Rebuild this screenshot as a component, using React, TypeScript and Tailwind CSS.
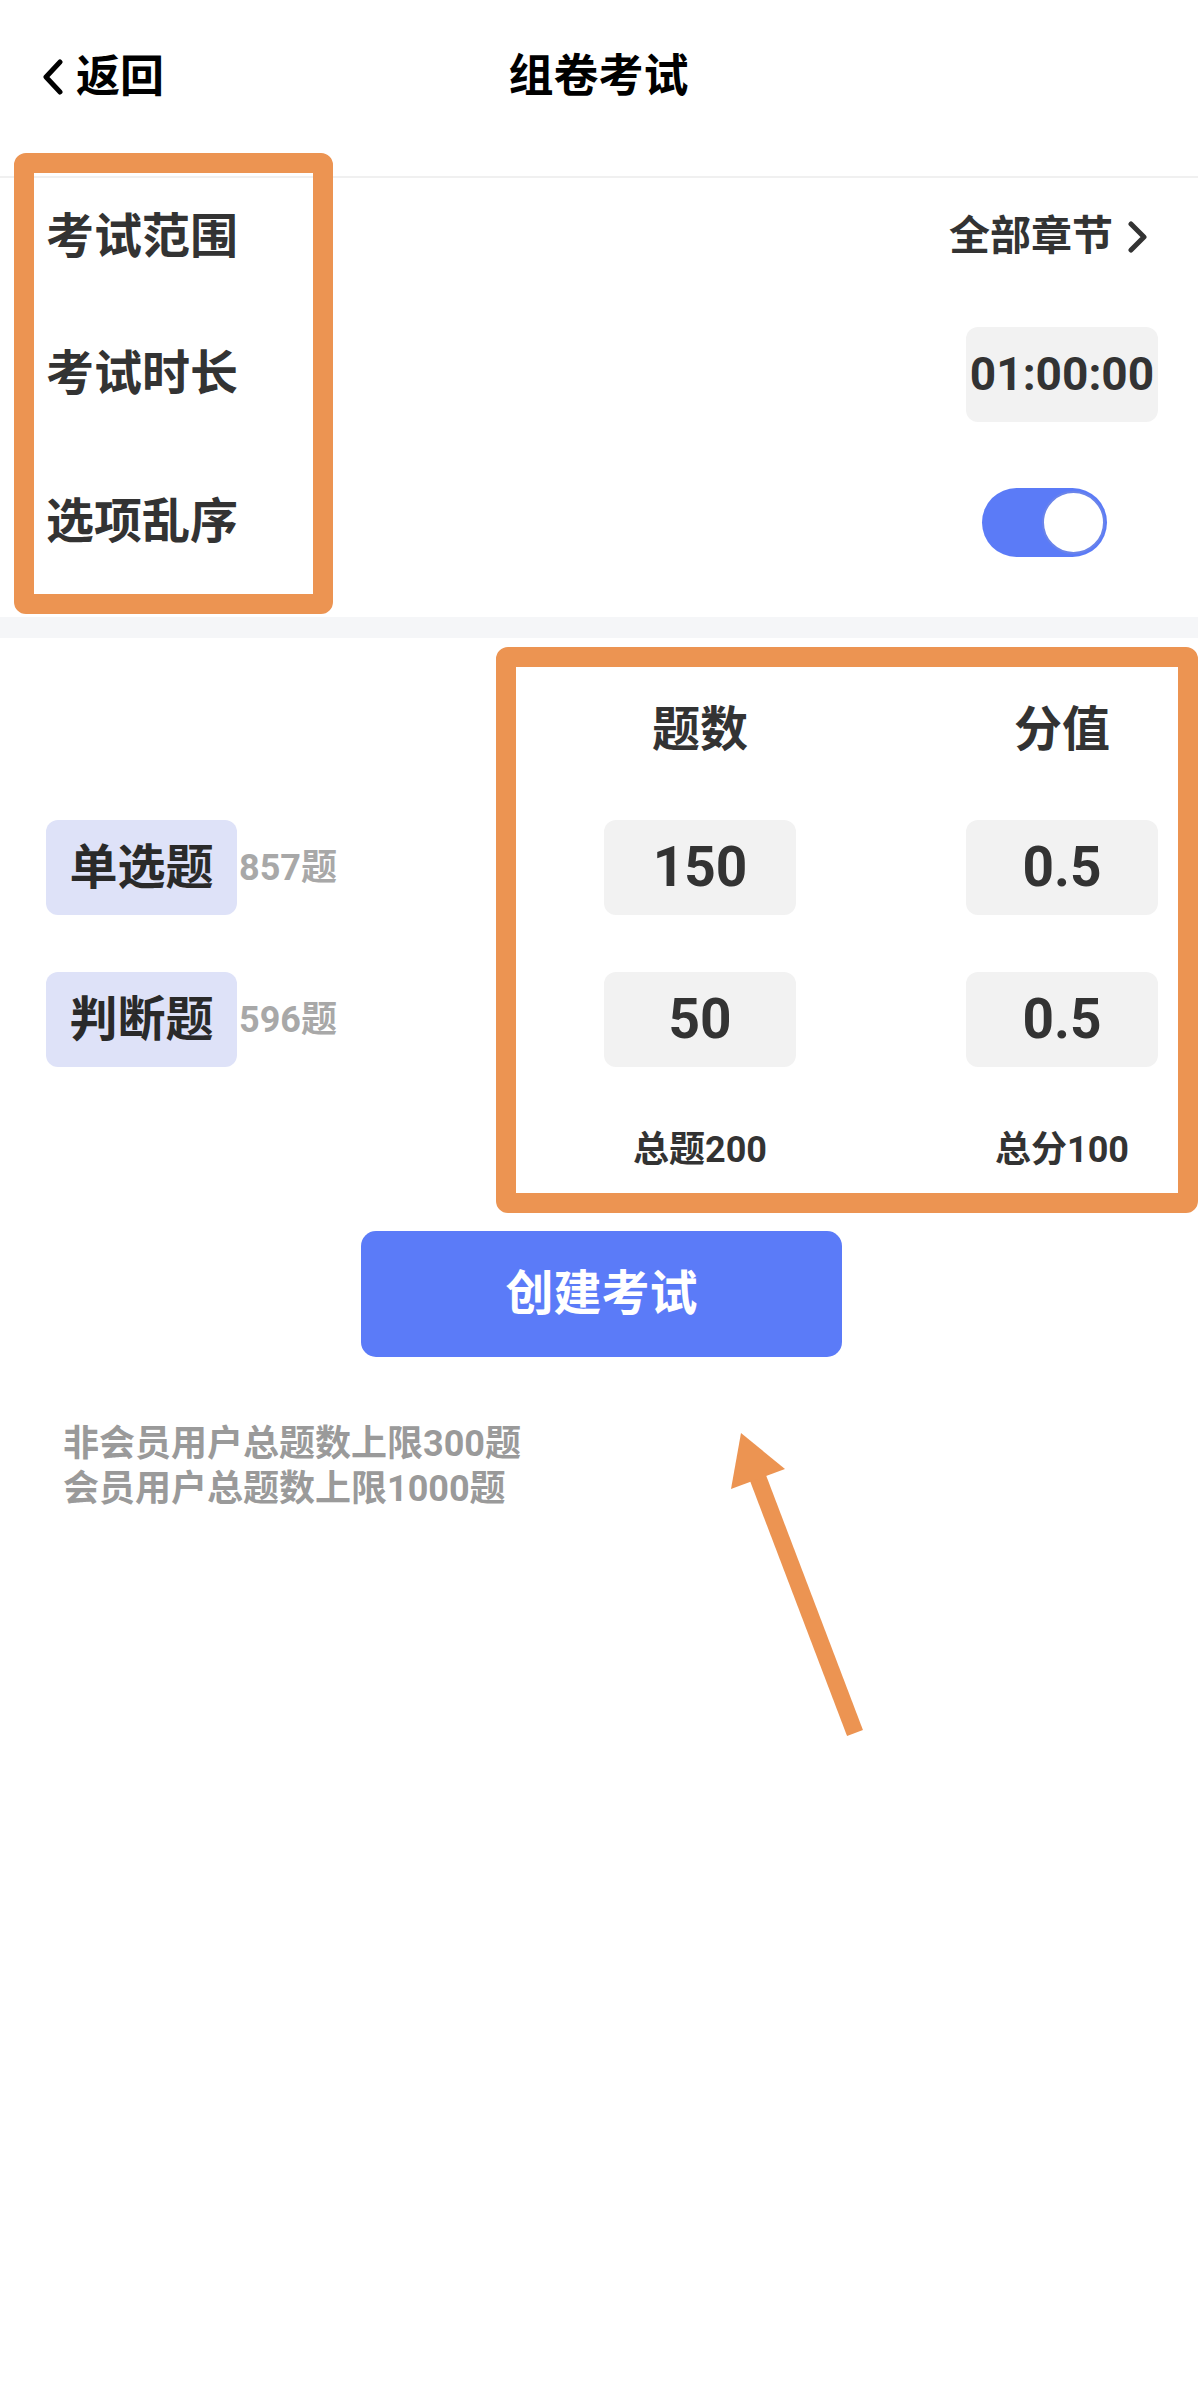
import React from "react";

const questionRows = [
  { label: "单选题", total: "857题", count: "150", score: "0.5" },
  { label: "判断题", total: "596题", count: "50", score: "0.5" },
];

const BackIcon = () => (
  <svg width="24" height="36" viewBox="0 0 24 36" fill="none">
    <path d="M20 3L6 18L20 33" stroke="#000" strokeWidth="5" strokeLinecap="round" strokeLinejoin="round" />
  </svg>
);

const ForwardIcon = () => (
  <svg width="22" height="32" viewBox="0 0 22 32" fill="none">
    <path d="M4 3L17 16L4 29" stroke="#333" strokeWidth="5" strokeLinecap="round" strokeLinejoin="round" />
  </svg>
);

const Toggle = ({ on }: { on: boolean }) => (
  <div
    className={`flex h-[69px] w-[125px] items-center rounded-full px-[2px] ${
      on ? "justify-end bg-[#5b7bf7]" : "justify-start bg-[#e5e5e5]"
    }`}
  >
    <div className="h-[63px] w-[63px] rounded-full border-2 border-[#6a84ea] bg-white" />
  </div>
);

const ValueBox = ({ value }: { value: string }) => (
  <div className="flex h-[95px] w-[192px] items-center justify-center rounded-[12px] bg-[#f2f2f2] text-[55px] font-bold text-[#333]">
    {value}
  </div>
);

const App = () => {
  return (
    <div className="relative min-h-[2397px] w-full bg-white font-['Roboto','Noto_Sans_CJK_SC',sans-serif]">
      {/* top bar */}
      <header className="h-[178px] border-b-2 border-[#f0f0f0] pt-[50px] pl-[40px] pr-[41px]">
        <div className="grid h-[54px] grid-cols-[1fr_auto_1fr] items-center">
          <div className="flex items-center gap-[12px]">
            <BackIcon />
            <span className="text-[44px] leading-[54px] font-bold text-black">返回</span>
          </div>
          <h1 className="text-[45px] leading-[54px] font-bold text-black">组卷考试</h1>
          <div />
        </div>
      </header>

      {/* exam settings */}
      <section className="pt-[11px] pb-[47px]">
        <div className="flex h-[96px] items-center justify-between pl-[46px] pr-[40px]">
          <span className="text-[48px] font-bold text-[#333]">考试范围</span>
          <div className="mr-[9px] flex items-center gap-[14px]">
            <span className="text-[41px] font-bold text-[#333]">全部章节</span>
            <ForwardIcon />
          </div>
        </div>
        <div className="mt-[41px] flex h-[96px] items-center justify-between pl-[46px] pr-[40px]">
          <span className="text-[48px] font-bold text-[#333]">考试时长</span>
          <div className="flex h-[95px] w-[192px] items-center justify-center rounded-[12px] bg-[#f2f2f2] text-[46px] font-bold text-[#333]">
            01:00:00
          </div>
        </div>
        <div className="mt-[52px] flex h-[96px] items-center justify-between pl-[46px] pr-[40px]">
          <span className="text-[48px] font-bold text-[#333]">选项乱序</span>
          <div className="mr-[51px]">
            <Toggle on />
          </div>
        </div>
      </section>

      <div className="h-[21px] bg-[#f5f6f8]" />

      {/* question counts and scores */}
      <section className="pl-[46px] pr-[40px] pt-[52px]">
        <div className="flex h-[80px] items-center">
          <div className="flex-1" />
          <div className="w-[192px] text-center text-[48px] font-bold text-[#333]">题数</div>
          <div className="ml-[170px] w-[192px] text-center text-[48px] font-bold text-[#333]">分值</div>
        </div>

        <div className="mt-[50px] flex flex-col gap-[57px]">
          {questionRows.map((row) => (
            <div key={row.label} className="flex h-[95px] items-center">
              <div className="flex flex-1 items-center">
                <div className="flex h-[95px] w-[191px] items-center justify-center rounded-[12px] bg-[#dee2f8] text-[48px] font-bold text-[#2a2a2a]">
                  {row.label}
                </div>
                <span className="ml-[2px] text-[36px] font-bold text-[#a8a8a8]">{row.total}</span>
              </div>
              <ValueBox value={row.count} />
              <div className="ml-[170px]">
                <ValueBox value={row.score} />
              </div>
            </div>
          ))}
        </div>

        <div className="mt-[58px] flex h-[50px] items-center">
          <div className="flex-1" />
          <div className="w-[192px] text-center text-[36px] font-bold text-[#333]">总题200</div>
          <div className="ml-[170px] w-[192px] text-center text-[36px] font-bold text-[#333]">总分100</div>
        </div>
      </section>

      <button className="mt-[56px] ml-[361px] flex h-[126px] w-[481px] items-center justify-center rounded-[15px] bg-[#5b7bf8] text-[48px] font-bold text-white">
        创建考试
      </button>

      <div className="mt-[65px] pl-[63px] text-[36px] leading-[45px] font-bold text-[#9a9a9a]">
        <p>非会员用户总题数上限300题</p>
        <p>会员用户总题数上限1000题</p>
      </div>

      {/* highlight marks */}
      <div className="pointer-events-none absolute top-[153px] left-[14px] h-[461px] w-[319px] rounded-[12px] border-[20px] border-[#ec9452]" />
      <div className="pointer-events-none absolute top-[647px] left-[496px] h-[566px] w-[702px] rounded-[12px] border-[20px] border-[#ec9452]" />
      <svg
        className="pointer-events-none absolute top-[1400px] left-[700px]"
        width="200"
        height="360"
        viewBox="0 0 200 360"
      >
        <line x1="58" y1="78" x2="155" y2="333" stroke="#ec9452" strokeWidth="17" />
        <polygon points="41,33 31,89 85,69" fill="#ec9452" />
      </svg>
    </div>
  );
};

export default App;
